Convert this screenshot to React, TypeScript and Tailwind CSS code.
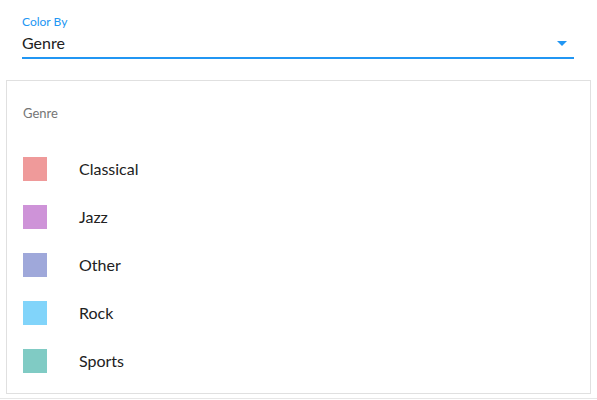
const genres = [
  { name: 'Classical', color: 'bg-[#ef9a9a]' },
  { name: 'Jazz', color: 'bg-[#ce93d8]' },
  { name: 'Other', color: 'bg-[#9fa8da]' },
  { name: 'Rock', color: 'bg-[#81d4fa]' },
  { name: 'Sports', color: 'bg-[#80cbc4]' },
];

export default function App() {
  return (
    <div className="w-[597px] h-[400px] bg-white overflow-hidden font-['Lato',sans-serif]">
      <div className="pl-[22px] pr-[23px] pt-[14px]">
        <div className="text-[12px] leading-[16px] text-[#2196f3]">Color By</div>
        <div className="flex items-center justify-between h-[26px] border-b-2 border-[#2196f3] box-content pb-[1px]">
          <span className="text-[16px] leading-[20px] text-[#212121]">Genre</span>
          <svg width="10" height="5" viewBox="0 0 10 5" className="mr-[7px]">
            <path d="M0 0 L10 0 L5 5 Z" fill="#2196f3" />
          </svg>
        </div>
      </div>
      <div className="mx-[6px] mt-[21px] h-[314px] border border-[#e0e0e0] pl-[16px] pt-[23px]">
        <div className="text-[13px] leading-[18px] text-[#757575]">Genre</div>
        <div className="mt-[35px] flex flex-col gap-[24px]">
          {genres.map((g) => (
            <div key={g.name} className="flex items-center h-[24px]">
              <div className={`w-[24px] h-[24px] ${g.color}`} />
              <span className="ml-[32px] text-[16px] leading-[20px] text-[#212121]">{g.name}</span>
            </div>
          ))}
        </div>
      </div>
      <div className="mt-[4px] h-[2px] border-t border-[#e6e6e6]" />
    </div>
  );
}
